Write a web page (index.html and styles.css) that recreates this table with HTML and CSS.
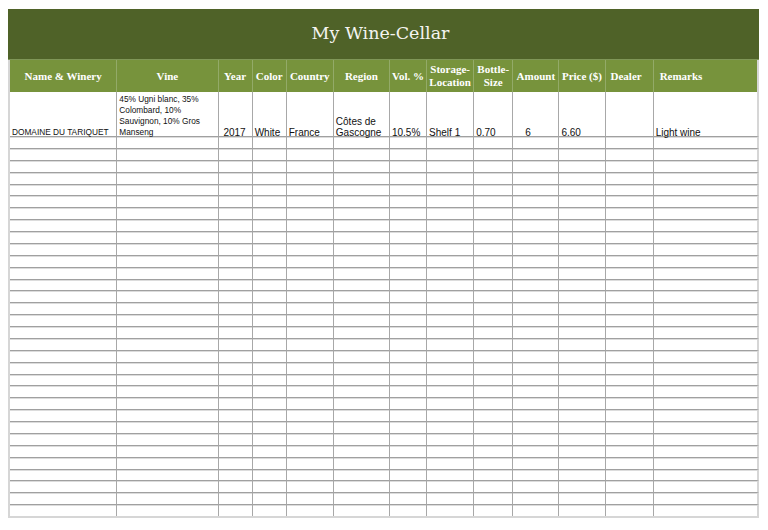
FILE: index.html
```html
<!DOCTYPE html>
<html>
<head>
<meta charset="utf-8">
<title>My Wine-Cellar</title>
<link rel="stylesheet" href="styles.css">
</head>
<body>
<div class="sheet">
  <div class="title">My Wine-Cellar</div>
  <table class="grid">
    <colgroup>
      <col style="width:107px"><col style="width:101px"><col style="width:34px"><col style="width:34px">
      <col style="width:47px"><col style="width:56px"><col style="width:37px"><col style="width:47px">
      <col style="width:39px"><col style="width:46px"><col style="width:46px"><col style="width:48px">
      <col style="width:105px">
    </colgroup>
    <thead>
      <tr>
        <th>Name &amp; Winery</th><th>Vine</th><th>Year</th><th>Color</th><th>Country</th><th>Region</th>
        <th>Vol. %</th><th>Storage-<br>Location</th><th>Bottle-<br>Size</th><th>Amount</th><th>Price ($)</th>
        <th class="left">Dealer</th><th class="left pad">Remarks</th>
      </tr>
    </thead>
    <tbody id="body">
      <tr class="first">
        <td class="small"><span class="v">DOMAINE DU TARIQUET</span></td>
        <td class="small vine"><span class="v">45% Ugni blanc, 35% Colombard, 10% Sauvignon, 10% Gros Manseng</span></td>
        <td class="num"><span class="v">2017</span></td>
        <td><span class="v">White</span></td>
        <td><span class="v">France</span></td>
        <td class="wrap"><span class="v">Côtes de Gascogne</span></td>
        <td><span class="v">10.5%</span></td>
        <td><span class="v">Shelf 1</span></td>
        <td><span class="v">0.70</span></td>
        <td class="indent"><span class="v">6</span></td>
        <td><span class="v">6.60</span></td>
        <td></td>
        <td><span class="v">Light wine</span></td>
      </tr>
    </tbody>
  </table>
</div>
<script src="script.js"></script>
</body>
</html>
```

FILE: script.js
```js
var body = document.getElementById('body');
for (var i = 0; i < 32; i++) {
  var tr = document.createElement('tr');
  tr.className = 'empty';
  for (var j = 0; j < 13; j++) {
    tr.appendChild(document.createElement('td'));
  }
  body.appendChild(tr);
}
```

FILE: styles.css
```css
html, body {
  margin: 0;
  padding: 0;
  background: #ffffff;
}
.sheet {
  margin: 9px 0 0 8px;
  width: 751px;
}
.title {
  height: 51px;
  background: #4f6228;
  color: #f4f4f0;
  font-family: "DejaVu Serif", "Liberation Serif", serif;
  font-size: 17.5px;
  line-height: 49px;
  text-align: center;
  padding-right: 6px;
  border-bottom: 1px solid #7f9657;
  box-sizing: border-box;
}
.grid {
  width: 751px;
  table-layout: fixed;
  border-collapse: separate;
  border-spacing: 0;
  border-left: 2px solid #d6d6d6;
  border-bottom: 2px solid #d6d6d6;
  font-family: "Liberation Sans", Arial, sans-serif;
  color: #111;
}
.grid th {
  height: 32px;
  padding: 0;
  background: #77933c;
  color: #ffffff;
  font-family: "Liberation Serif", serif;
  font-weight: bold;
  font-size: 11px;
  line-height: 13px;
  text-align: center;
  vertical-align: middle;
  border-right: 1px solid #93aa68;
  box-sizing: border-box;
}
.grid th:last-child { border-right: 2px solid #d6d6d6; }
.grid th.left { text-align: left; padding-left: 5px; }
.grid th.pad { padding-left: 6px; }
.grid td {
  padding: 0 0 0 2px;
  font-size: 10px;
  line-height: 11px;
  vertical-align: bottom;
  white-space: nowrap;
  overflow: hidden;
  border-right: 1px solid #a8a8a8;
  border-bottom: 1px solid #a0a0a0;
  box-shadow: inset 0 1px 0 #dcdcdc;
}
.grid td:last-child { border-right: 2px solid #d6d6d6; }
.grid tr.first td {
  height: 44px;
  box-shadow: none;
  padding-bottom: 0;
  line-height: 11px;
  overflow: visible;
}
.grid .v {
  display: block;
  margin-bottom: -2px;
}
.grid tr.empty td {
  height: 10.875px;
}
.grid tr.empty:last-child td { border-bottom: none; }
.grid tr.first td.small { font-size: 8.3px; line-height: 11px; }
.grid td.vine { white-space: normal; }
.grid td.wrap { white-space: normal; line-height: 11.5px; }
.grid td.num { text-align: right; padding-right: 6px; }
.grid td.indent { padding-left: 12px; }
```
